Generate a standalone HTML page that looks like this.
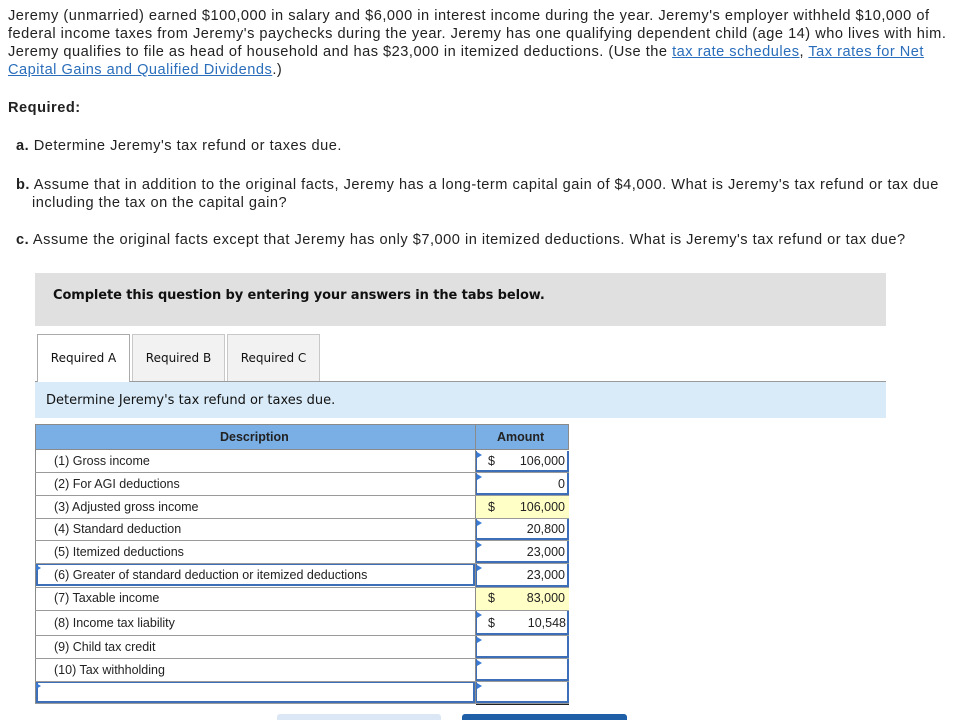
<!DOCTYPE html>
<html><head><meta charset="utf-8"><style>
body{margin:0;background:#fff;width:957px;height:718px;overflow:hidden;position:relative;font-family:"Liberation Sans",Arial,sans-serif;color:#222;}
.p{position:absolute;left:8px;font-size:14.6px;line-height:18px;white-space:nowrap;letter-spacing:0.5px;}
a{color:#2a6ebb;text-decoration:underline;}
.band{position:absolute;left:35px;top:273px;width:851px;height:53px;background:#e0e0e0;}
.band div{position:absolute;left:18px;top:15px;font:bold 13px "DejaVu Sans",Verdana,sans-serif;color:#111;letter-spacing:-0.1px}
.tab{position:absolute;top:334px;height:47px;border:1px solid #c8c8c8;border-bottom:none;background:#f2f2f2;font:12px "DejaVu Sans",Verdana,sans-serif;color:#111;text-align:center;line-height:46px;box-sizing:border-box;}
.blue{position:absolute;left:35px;top:381px;width:851px;height:37px;background:#d9ebf9;border-top:1px solid #9a9a9a;box-sizing:border-box;}
.blue div{position:absolute;left:11px;top:11px;font:13px "DejaVu Sans",Verdana,sans-serif;color:#111;}
.t{position:absolute;font-size:12.5px;color:#222;}
.line{position:absolute;height:1px;background:#9a9a9a;}
.ac{position:absolute;left:476px;width:93px;box-sizing:border-box;}
.tri{position:absolute;width:0;height:0;border-top:3px solid transparent;border-bottom:3px solid transparent;border-left:5px solid #3a7bd5;}
</style></head><body>
<div class="p" style="top:7px">Jeremy (unmarried) earned $100,000 in salary and $6,000 in interest income during the year. Jeremy's employer withheld $10,000 of</div>
<div class="p" style="top:25px">federal income taxes from Jeremy's paychecks during the year. Jeremy has one qualifying dependent child (age 14) who lives with him.</div>
<div class="p" style="top:43px">Jeremy qualifies to file as head of household and has $23,000 in itemized deductions. (Use the <a>tax rate schedules</a>, <a>Tax rates for Net</a></div>
<div class="p" style="top:61px"><a>Capital Gains and Qualified Dividends</a>.)</div>
<div class="p" style="top:99px;font-weight:bold">Required:</div>
<div class="p" style="top:137px;left:16px"><b>a.</b> Determine Jeremy's tax refund or taxes due.</div>
<div class="p" style="top:176px;left:16px"><b>b.</b> Assume that in addition to the original facts, Jeremy has a long-term capital gain of $4,000. What is Jeremy's tax refund or tax due</div>
<div class="p" style="top:194px;left:32px">including the tax on the capital gain?</div>
<div class="p" style="top:231px;left:16px"><b>c.</b> Assume the original facts except that Jeremy has only $7,000 in itemized deductions. What is Jeremy's tax refund or tax due?</div>
<div class="band"><div>Complete this question by entering your answers in the tabs below.</div></div>
<div class="tab" style="left:37px;width:93px;background:#fff;border-color:#aaa;height:48px;z-index:2">Required A</div>
<div class="tab" style="left:132px;width:93px">Required B</div>
<div class="tab" style="left:227px;width:93px">Required C</div>
<div class="blue"><div>Determine Jeremy's tax refund or taxes due.</div></div>

<div style="position:absolute;left:35px;top:424px;width:534px;height:26px;background:#7aafe6;border:1px solid #8a8a8a;box-sizing:border-box"></div>
<div style="position:absolute;left:475px;top:424px;width:1px;height:280px;background:#8a8a8a"></div>
<div style="position:absolute;left:35px;top:424px;width:1px;height:280px;background:#8a8a8a"></div>
<div class="t" style="left:220px;top:430px;font-weight:bold">Description</div>
<div class="t" style="left:497px;top:430px;font-weight:bold">Amount</div>

<div class="line" style="left:35px;width:534px;top:472px"></div>
<div class="line" style="left:35px;width:534px;top:495px"></div>
<div class="line" style="left:35px;width:534px;top:518px"></div>
<div class="line" style="left:35px;width:534px;top:540px"></div>
<div class="line" style="left:35px;width:534px;top:563px"></div>
<div class="line" style="left:35px;width:534px;top:587px"></div>
<div class="line" style="left:35px;width:534px;top:610px"></div>
<div class="line" style="left:35px;width:534px;top:635px"></div>
<div class="line" style="left:35px;width:534px;top:658px"></div>
<div class="line" style="left:35px;width:534px;top:681px"></div>
<div class="line" style="left:35px;width:534px;top:703px"></div>

<div style="position:absolute;left:36px;top:564px;width:439px;height:22px;border:2px solid #3d6fb8;border-top-width:1px;box-sizing:border-box"></div>
<div style="position:absolute;left:36px;top:682px;width:439px;height:21px;border:2px solid #3d6fb8;border-top-width:1px;box-sizing:border-box"></div>
<div class="tri" style="left:36px;top:565px"></div>
<div class="tri" style="left:36px;top:683px"></div>

<div class="ac" style="top:451px;height:21px;border:2px solid #3d6fb8;border-top:none;border-left:1px solid #3d6fb8"></div>
<div class="ac" style="top:473px;height:22px;border:2px solid #3d6fb8;border-top:none;border-left:1px solid #3d6fb8"></div>
<div class="ac" style="top:496px;height:22px;background:#ffffc6"></div>
<div class="ac" style="top:519px;height:21px;border:2px solid #3d6fb8;border-top:none;border-left:1px solid #3d6fb8"></div>
<div class="ac" style="top:541px;height:22px;border:2px solid #3d6fb8;border-top:none;border-left:1px solid #3d6fb8"></div>
<div class="ac" style="top:564px;height:23px;border:2px solid #3d6fb8;border-top:none;border-left:1px solid #3d6fb8"></div>
<div class="ac" style="top:588px;height:22px;background:#ffffc6"></div>
<div class="ac" style="top:611px;height:24px;border:2px solid #3d6fb8;border-top:none;border-left:1px solid #3d6fb8"></div>
<div class="ac" style="top:636px;height:22px;border:2px solid #3d6fb8;border-top:none;border-left:1px solid #3d6fb8"></div>
<div class="ac" style="top:659px;height:22px;border:2px solid #3d6fb8;border-top:none;border-left:1px solid #3d6fb8"></div>
<div class="ac" style="top:682px;height:21px;border:2px solid #3d6fb8;border-top:none;border-left:1px solid #3d6fb8"></div>
<div class="tri" style="left:477px;top:452px"></div>
<div class="tri" style="left:477px;top:474px"></div>
<div class="tri" style="left:477px;top:520px"></div>
<div class="tri" style="left:477px;top:542px"></div>
<div class="tri" style="left:477px;top:565px"></div>
<div class="tri" style="left:477px;top:612px"></div>
<div class="tri" style="left:477px;top:637px"></div>
<div class="tri" style="left:477px;top:660px"></div>
<div class="tri" style="left:477px;top:683px"></div>
<div style="position:absolute;left:476px;top:704px;width:93px;height:1px;background:#222"></div>

<div class="t" style="left:54px;top:454px">(1) Gross income</div>
<div class="t" style="left:54px;top:477px">(2) For AGI deductions</div>
<div class="t" style="left:54px;top:500px">(3) Adjusted gross income</div>
<div class="t" style="left:54px;top:522px">(4) Standard deduction</div>
<div class="t" style="left:54px;top:545px">(5) Itemized deductions</div>
<div class="t" style="left:54px;top:568px">(6) Greater of standard deduction or itemized deductions</div>
<div class="t" style="left:54px;top:591px">(7) Taxable income</div>
<div class="t" style="left:54px;top:616px">(8) Income tax liability</div>
<div class="t" style="left:54px;top:640px">(9) Child tax credit</div>
<div class="t" style="left:54px;top:663px">(10) Tax withholding</div>

<div class="t" style="left:488px;top:454px">$</div><div class="t" style="right:392px;top:454px">106,000</div>
<div class="t" style="right:392px;top:477px">0</div>
<div class="t" style="left:488px;top:500px">$</div><div class="t" style="right:392px;top:500px">106,000</div>
<div class="t" style="right:392px;top:522px">20,800</div>
<div class="t" style="right:392px;top:545px">23,000</div>
<div class="t" style="right:392px;top:568px">23,000</div>
<div class="t" style="left:488px;top:591px">$</div><div class="t" style="right:392px;top:591px">83,000</div>
<div class="t" style="left:488px;top:616px">$</div><div class="t" style="right:391px;top:616px">10,548</div>

<div style="position:absolute;left:277px;top:714px;width:164px;height:6px;background:#dbe7f4;border-radius:3px 3px 0 0"></div>
<div style="position:absolute;left:462px;top:714px;width:165px;height:6px;background:#1f5fa8;border-radius:3px 3px 0 0"></div>
</body></html>
